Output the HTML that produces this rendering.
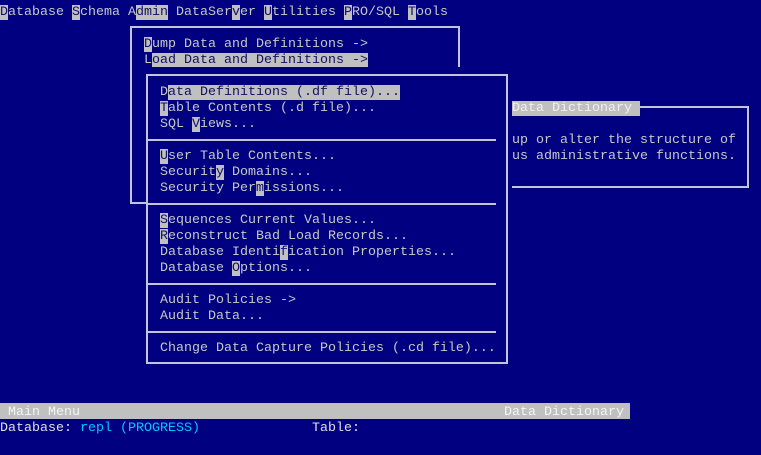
<!DOCTYPE html>
<html><head><meta charset="utf-8"><style>
html,body{margin:0;padding:0;background:#000080;width:761px;height:455px;overflow:hidden;position:relative}
.l{position:absolute;left:0;height:16px;line-height:16px;margin-top:2px;font-family:"Liberation Mono",monospace;font-size:13.33px;color:#c8c8c8;white-space:pre}
.h{background:#c0c0c0;color:#101060}
.box{position:absolute;border:2px solid #c4c4d8;box-sizing:border-box}
.bg{position:absolute;background:#000080}
.sep{position:absolute;height:2px;background:#c4c4d8}
.c{color:#00c8ff}
.bar{position:absolute;background:#c0c0c0}
</style></head><body>
<div class="l" style="top:3px"><span class="h">D</span>atabase <span class="h">S</span>chema A<span class="h">dmin</span> DataSer<span class="h">v</span>er <span class="h">U</span>tilities <span class="h">P</span>RO/SQL <span class="h">T</span>ools</div>

<div class="box" style="left:130px;top:26px;width:330px;height:178px"></div>
<div class="l" style="top:35px;left:144px"><span class="h">D</span>ump Data and Definitions -&gt;</div>
<div class="l" style="top:51px;left:144px">L<span class="h">oad Data and Definitions -&gt;</span></div>

<div class="bg" style="left:508px;top:99px;width:245px;height:96px"></div>
<div class="box" style="left:509px;top:106px;width:240px;height:82px"></div>
<div class="l" style="top:99px;left:512px"><span class="h" style="color:#f0f0f0">Data Dictionary </span></div>
<div class="l" style="top:131px;left:512px">up or alter the structure of</div>
<div class="l" style="top:147px;left:512px">us administrative functions.</div>

<div class="bg" style="left:140px;top:67px;width:372px;height:304px"></div>
<div class="box" style="left:146px;top:74px;width:362px;height:290px"></div>
<div class="sep" style="left:147px;top:139px;width:349px"></div>
<div class="sep" style="left:147px;top:203px;width:349px"></div>
<div class="sep" style="left:147px;top:283px;width:349px"></div>
<div class="sep" style="left:147px;top:331px;width:349px"></div>
<div class="sep" style="left:131px;top:202px;width:16px"></div>
<div class="l" style="top:83px;left:160px">D<span class="h">ata Definitions (.df file)...</span></div>
<div class="l" style="top:99px;left:160px"><span class="h">T</span>able Contents (.d file)...</div>
<div class="l" style="top:115px;left:160px">SQL <span class="h">V</span>iews...</div>
<div class="l" style="top:147px;left:160px"><span class="h">U</span>ser Table Contents...</div>
<div class="l" style="top:163px;left:160px">Securit<span class="h">y</span> Domains...</div>
<div class="l" style="top:179px;left:160px">Security Per<span class="h">m</span>issions...</div>
<div class="l" style="top:211px;left:160px"><span class="h">S</span>equences Current Values...</div>
<div class="l" style="top:227px;left:160px"><span class="h">R</span>econstruct Bad Load Records...</div>
<div class="l" style="top:243px;left:160px">Database Identi<span class="h">f</span>ication Properties...</div>
<div class="l" style="top:259px;left:160px">Database <span class="h">O</span>ptions...</div>
<div class="l" style="top:291px;left:160px">Audit Policies -&gt;</div>
<div class="l" style="top:307px;left:160px">Audit Data...</div>
<div class="l" style="top:339px;left:160px">Change Data Capture Policies (.cd file)...</div>

<div class="bar" style="left:0;top:403px;width:630px;height:16px"></div>
<div class="l" style="top:403px;left:8px;color:#f4f4f4">Main Menu</div>
<div class="l" style="top:403px;left:504px;color:#f4f4f4">Data Dictionary</div>
<div class="l" style="top:419px;color:#e0e0e0">Database: <span class="c">repl (PROGRESS)</span></div>
<div class="l" style="top:419px;left:312px;color:#e0e0e0">Table:</div>
</body></html>
